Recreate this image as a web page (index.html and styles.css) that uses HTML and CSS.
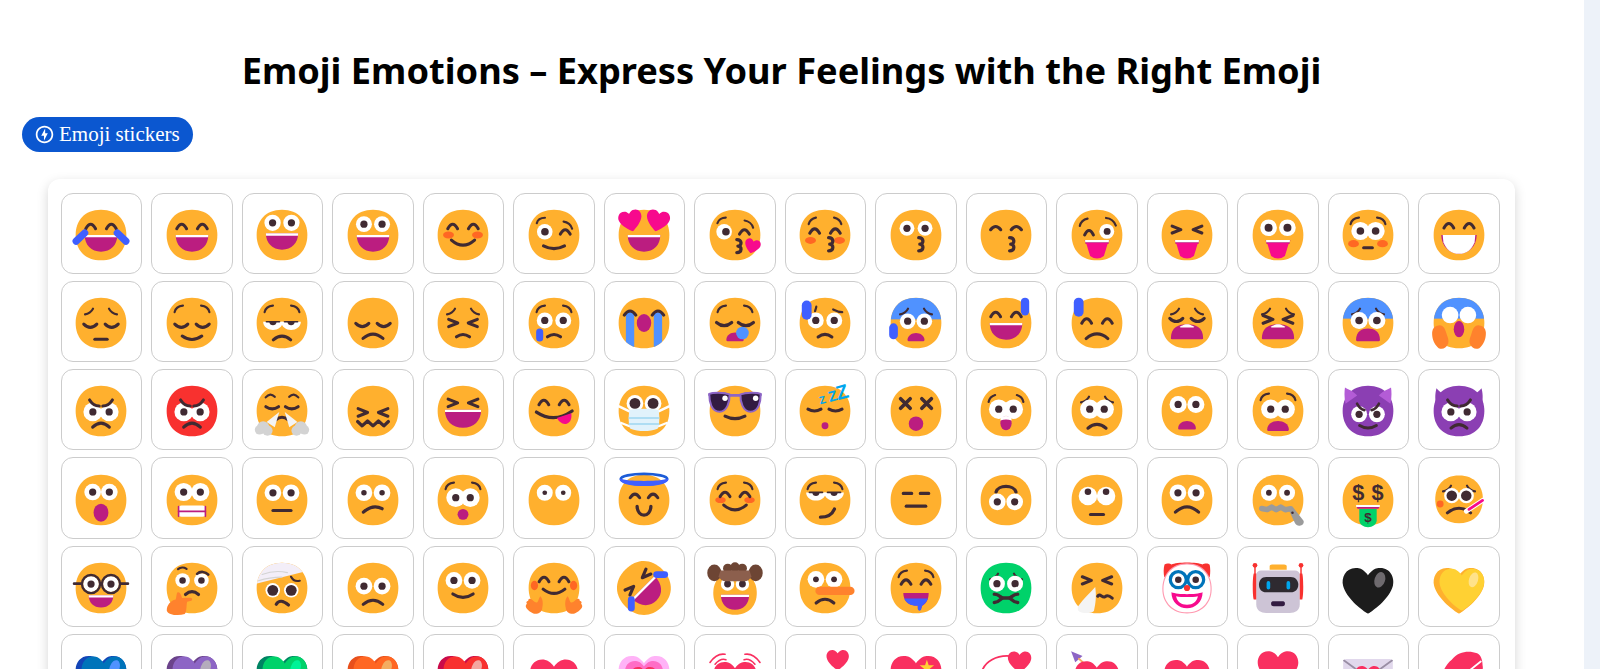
FILE: index.html
```html
<!DOCTYPE html>
<html lang="en">

<head>
    <meta charset="UTF-8">
    <meta name="viewport" content="width=device-width, initial-scale=1.0">
    <title>Emoji Emotions</title>
    <link rel="stylesheet" href="styles.css">
</head>

<body>
    <svg class="defs" width="0" height="0">
        <clipPath id="faceClip">
            <path d="M15.9989 29.9978C25.3333 29.9978 29.9978 23.7303 29.9978 15.9989C29.9978 8.26751 25.3333 2 15.9989 2C6.66443 2 2 8.26751 2 15.9989C2 23.7303 6.66443 29.9978 15.9989 29.9978Z" />
        </clipPath>
    </svg>
    <main class="page">
        <h1>Emoji Emotions – Express Your Feelings with the Right Emoji</h1>
        <a class="pill" href="#">
            <svg class="pill-icon" viewBox="0 0 24 24">
                <path fill="currentColor" d="M12 2.02c-5.51 0-9.98 4.47-9.98 9.98s4.47 9.98 9.98 9.98 9.98-4.47 9.98-9.98S17.51 2.02 12 2.02zm0 17.96c-4.4 0-7.98-3.58-7.98-7.98S7.6 4.02 12 4.02 19.98 7.6 19.98 12 16.4 19.98 12 19.98zM12.75 5l-4.5 8.5h3.14V19l4.36-8.5h-3z" />
            </svg>
            Emoji stickers
        </a>
        <section class="card">
            <div class="emoji-grid" id="emojiGrid">
                <!-- Cells are generated in script.js -->
            </div>
        </section>
    </main>
    <div class="track"></div>
    <script src="script.js"></script>
</body>

</html>
```

FILE: styles.css
```css
html,
body {
    height: 100%;
}

body {
    margin: 0;
    display: flex;
    height: 100vh;
    overflow: hidden;
    background-color: #fff;
    font-family: "Liberation Serif", serif;
    color: #000;
}

.defs {
    position: absolute;
}

.page {
    flex: 1;
    min-width: 0;
    padding: 46px 0 0 22px;
}

.track {
    width: 16px;
    background-color: #edf2f9;
}

h1 {
    margin: 0 43px 22px 0;
    font-family: "Noto Sans", sans-serif;
    font-size: 36.2px;
    line-height: 48px;
    font-weight: 700;
    text-align: center;
}

.pill {
    display: inline-flex;
    align-items: center;
    gap: 4px;
    height: 35px;
    margin-top: 1px;
    padding: 0 13px 0 12px;
    border-radius: 18px;
    background-color: #0b57d0;
    color: #fff;
    font-size: 21px;
    text-decoration: none;
}

.pill-icon {
    width: 21px;
    height: 21px;
}

.card {
    width: 1440px;
    margin: 27px 0 0 25.5px;
    padding: 13.5px 14.5px 13.5px 13px;
    background-color: #fff;
    border-radius: 12px;
    box-shadow: 0 4px 12px rgba(0, 0, 0, 0.17);
}

.emoji-grid {
    display: grid;
    grid-template-columns: repeat(16, 81.5px);
    grid-auto-rows: 81.3px;
    column-gap: 9px;
    row-gap: 7px;
}

.emoji-cell {
    display: flex;
    justify-content: center;
    align-items: center;
    box-sizing: border-box;
    padding-top: 3.5px;
    border: 1px solid #ccc;
    border-radius: 12px;
    background-color: #fff;
}

.emoji {
    width: 58px;
    height: 58px;
    overflow: visible;
}

.emoji-letter {
    font-family: "Liberation Sans", sans-serif;
    font-weight: 700;
}
```

FILE: script.js
```js
const DARK = '#402A32';
const MOUTH = '#BB1D80';
const PINK = '#F70A8D';
const BLUE = '#3F5FFF';
const SKY = '#5092FF';
const ORANGE = '#FF822D';
const BLUSH = '#FF6723';
const PURPLE = '#8D65C5';
const DEVIL = '#8B3FB3';
const RED = '#F92F60';
const FACE_PATH = 'M15.9989 29.9978C25.3333 29.9978 29.9978 23.7303 29.9978 15.9989C29.9978 8.26751 25.3333 2 15.9989 2C6.66443 2 2 8.26751 2 15.9989C2 23.7303 6.66443 29.9978 15.9989 29.9978Z';
const HEART_PATH = 'M21.0084 5.16227C18.1675 5.67067 15.9969 9.06675 15.9969 9.06675C15.9969 9.06675 13.8162 5.67067 10.9854 5.16227C3.97328 3.91162 1.08242 10.1547 2.25277 14.8015C3.98329 21.6648 12.3058 27.8164 15.0866 29.7178C15.6367 30.0941 16.357 30.0941 16.9171 29.7178C19.708 27.8164 28.0304 21.6648 29.7509 14.8015C30.9113 10.1547 28.0204 3.91162 21.0084 5.16227Z';

// Small drawing helpers, all in the 32 unit box of the emoji
const face = (c = '#FFB02E') => `<path fill="${c}" d="${FACE_PATH}"/>`;
const stroke = (d, w = 1.7, c = DARK) => `<path d="${d}" fill="none" stroke="${c}" stroke-width="${w}" stroke-linecap="round" stroke-linejoin="round"/>`;
const fill = (d, c) => `<path d="${d}" fill="${c}"/>`;
const dot = (x, y, r, c = DARK) => `<circle cx="${x}" cy="${y}" r="${r}" fill="${c}"/>`;
const both = s => s + `<g transform="matrix(-1 0 0 1 32 0)">${s}</g>`;
const heart = (x, y, s, rot = 0, c = RED) => `<path fill="${c}" transform="translate(${x} ${y}) rotate(${rot}) scale(${s}) translate(-16 -17)" d="${HEART_PATH}"/>`;
const placed = (x, y, s, c = RED) => `<path fill="${c}" transform="translate(${x} ${y}) scale(${s})" d="${HEART_PATH}"/>`;

const eyes = (dx, y, r = 4.4, p = 2, pdx = 0, py = 0) =>
    dot(16 - dx, y, r, '#fff') + dot(16 + dx, y, r, '#fff') + dot(16 - dx + pdx, y + py, p) + dot(16 + dx + pdx, y + py, p);
const arc = (x, y, w = 2.7, h = 3) => stroke(`M${x - w} ${y + h / 2}Q${x} ${y - h * 1.1} ${x + w} ${y + h / 2}`);
const arcs = (dx = 5.7, y = 11, w = 2.7, h = 3) => arc(16 - dx, y, w, h) + arc(16 + dx, y, w, h);
const closed = (dx = 5.9, y = 17, w = 3.6, h = 1.8) => both(stroke(`M${16 - dx - w} ${y}Q${16 - dx} ${y + h * 2} ${16 - dx + w} ${y}`));
const squint = (y, dx = 5.8, s = 2.5) => both(stroke(`M${16 - dx - s} ${y - s * 0.8}L${16 - dx + s} ${y}L${16 - dx - s} ${y + s * 0.8}`));
const sadBrows = both(stroke('M7.2 11.2C9 11 11 9.5 11.6 8.1', 1.2));
const archBrows = both(stroke('M6.4 10C6.8 8 8.6 6.6 11 6.4', 1.2));
const frown = (y = 23, w = 5.2, h = 2.6) => stroke(`M${16 - w} ${y + h / 2}Q16 ${y - h * 1.1} ${16 + w} ${y + h / 2}`);
const smile = (y = 20, w = 6.4, h = 2.8) => stroke(`M${16 - w} ${y}Q16 ${y + h * 2} ${16 + w} ${y}`);
const dash = (y = 25, w = 3.2) => stroke(`M${16 - w} ${y}H${16 + w}`);
const blush = (dx = 8, y = 16, rx = 3, ry = 1.9) => `<ellipse cx="${16 - dx}" cy="${y}" rx="${rx}" ry="${ry}" fill="${BLUSH}"/><ellipse cx="${16 + dx}" cy="${y}" rx="${rx}" ry="${ry}" fill="${BLUSH}"/>`;
const grin = (t = 16, h = 9.2, w = 9) =>
    fill(`M${16 - w} ${t}H${16 + w}C${16 + w} ${t + h * 0.6} ${16 + w * 0.6} ${t + h} 16 ${t + h}C${16 - w * 0.6} ${t + h} ${16 - w} ${t + h * 0.6} ${16 - w} ${t}Z`, MOUTH) +
    fill(`M${16 - w} ${t}H${16 + w}L${16 + w - 0.1} ${t + 1.3}H${16 - w + 0.1}Z`, '#fff');
const dome = (t, b, w) => fill(`M${16 - w} ${b - 0.6}C${16 - w} ${t + 1.5} ${16 - w * 0.5} ${t} 16 ${t}C${16 + w * 0.5} ${t} ${16 + w} ${t + 1.5} ${16 + w} ${b - 0.6}Q${16 + w} ${b} ${16 + w - 0.6} ${b}H${16 - w + 0.6}Q${16 - w} ${b} ${16 - w} ${b - 0.6}Z`, MOUTH);
const oval = (y, rx, ry) => `<ellipse cx="16" cy="${y}" rx="${rx}" ry="${ry}" fill="${MOUTH}"/>`;
const tongue = (c = PINK) =>
    fill('M9.2 18.8H22.8L22.3 21H9.7Z', MOUTH) + fill('M9.4 18.8H22.6L22.5 20H9.5Z', '#fff') +
    fill('M10 20.4H22L19.8 27.6Q16 30.4 12.2 27.6Z', c);
const lips = (x, y) => stroke(`M${x} ${y}C${x + 3} ${y} ${x + 3} ${y + 3.5} ${x + 0.6} ${y + 3.6}C${x + 3} ${y + 3.7} ${x + 3} ${y + 7.2} ${x} ${y + 7.2}`, 1.8);
const capsule = (x, y1, y2, w = 4.6, c = BLUE) => stroke(`M${x} ${y1 + w / 2}V${y2 - w / 2}`, w, c);
const blueTop = (y = 14) => `<rect x="0" y="0" width="32" height="${y}" fill="${SKY}" clip-path="url(#faceClip)"/>`;
const angry = (c) =>
    eyes(4.5, 16.5, 5.2, 2) + fill('M7.5 8.6L16 14.8L24.5 8.6V6H7.5Z', c) +
    both(stroke('M9.7 9.9C11 12 13 13.2 15 13.2', 1.7));
const halfEyes = (dx, y) => both(
    fill(`M${16 - dx - 5.4} ${y}H${16 - dx + 5.4}C${16 - dx + 5.2} ${y + 6} ${16 - dx - 5.2} ${y + 6} ${16 - dx - 5.4} ${y}Z`, '#fff') +
    fill(`M${16 - dx - 2} ${y}H${16 - dx + 2}C${16 - dx + 2} ${y + 2.6} ${16 - dx - 2} ${y + 2.6} ${16 - dx - 2} ${y}Z`, DARK) +
    stroke(`M${16 - dx - 3.6} ${y}H${16 - dx + 3.6}`, 0.9));
const glossHeart = (c, shade, gloss) =>
    fill(HEART_PATH, shade) + `<path fill="${c}" transform="translate(3.5 0.5) scale(.88 .95)" d="${HEART_PATH}"/>` +
    (gloss ? `<ellipse cx="23.5" cy="11.5" rx="2.7" ry="4.4" transform="rotate(20 23.5 11.5)" fill="${gloss}"/>` : '');
const zed = (x, y, s, rot) => `<text x="${x}" y="${y}" class="emoji-letter" font-size="${s}" fill="#00A6ED" transform="rotate(${rot} ${x} ${y})">Z</text>`;
const money = (x, y, s, c = DARK) => `<text x="${x}" y="${y}" class="emoji-letter" font-size="${s}" text-anchor="middle" fill="${c}">$</text>`;

const emojis = [
    // Row 1
    face() + arcs() + grin() + stroke('M2.3 19.4L7 14.9', 4, BLUE) + stroke('M29.7 19.4L25 14.9', 4, BLUE),
    face() + arcs() + grin(),
    face() + eyes(5.2, 9.3, 4.5, 2) + grin(15.1, 9, 8.9),
    face() + eyes(5, 10, 4.4, 2) + grin(16),
    face() + blush() + arcs(5.7, 11) + smile(18.8),
    face() + dot(10.9, 14.2, 4.3, '#fff') + dot(11, 14.2, 2.1) + arc(22.2, 14) + stroke('M6.5 9.5C7 7.5 9 6.5 11 6.5', 1.2) + stroke('M21.3 8.6C23.5 8.8 25.5 10.5 26 12.5', 1.2) + smile(22, 5.8, 1.5),
    face() + grin() + heart(8.6, 8, 0.46, -12, PINK) + heart(23.6, 8, 0.46, 12, PINK),
    face() + dot(10, 14.2, 4.3, '#fff') + dot(11, 14.2, 2.1) + arc(21.2, 14) + stroke('M6.3 9.5C6.8 7.6 8.8 6.4 10.9 6.4', 1.2) + stroke('M21.3 8C23.5 8.3 25.5 10 26 12', 1.2) + lips(17, 18.5) + heart(25.6, 22, 0.31, 15, PINK),
    face() + blush(8, 19) + arcs(5.7, 13.5) + both(stroke('M7 10C7.5 8.2 9 6.8 11 6.4', 1.2)) + lips(18, 17.5),
    face() + eyes(5, 12.3, 4.1, 2) + lips(17.5, 17.5),
    face() + arcs(5.7, 12, 2.8, 2.2) + lips(18, 17.5),
    face() + arc(11.6, 14.4, 2.4) + dot(21.4, 14, 4.1, '#fff') + dot(21.6, 14, 1.9) + stroke('M6.5 11C7 9 8.5 7.5 10.8 7', 1.2) + stroke('M21 6.6C23.5 6.8 25.5 8.5 26.4 10.8', 1.2) + tongue(),
    face() + squint(13, 5.8, 2.4) + tongue(),
    face() + eyes(5.2, 12, 4.6, 2.2) + tongue(),
    face() + eyes(4.2, 13.8, 5, 2.1) + archBrows + blush(8, 20.8, 3, 2) + dash(23, 2.4),
    face() + arcs(5.6, 10.6) + fill('M6.2 16H25.8C25.6 22.5 21 26.4 16 26.4C11 26.4 6.4 22.5 6.2 16Z', MOUTH) + fill('M7 16H25L24.6 20C23 24 20.5 26.4 16 26.4C11.5 26.4 9 24 7.4 20Z', '#fff'),

    // Row 2
    face() + sadBrows + closed(5.9, 16.6) + dash(25, 3.4),
    face() + archBrows + closed(5.9, 16.6) + smile(23.2, 5.4, 1.9),
    face() + archBrows + halfEyes(5, 15.3) + frown(24, 4.8),
    face() + closed(5.9, 16.2) + frown(23, 5.5, 3),
    face() + sadBrows + squint(16, 5.4, 2.5) + frown(22.8, 3.6, 1.6),
    face() + archBrows + eyes(5.1, 14.6, 4.4, 2) + frown(22.8, 3.6, 1.6) + capsule(8.1, 19, 26.2, 3.9),
    face() + `<g clip-path="url(#faceClip)"><rect x="6" y="10" width="4.6" height="22" fill="${SKY}"/><rect x="21.4" y="10" width="4.6" height="22" fill="${SKY}"/></g>` + arcs(7.7, 10.2, 3.2, 2.8) + oval(16, 4, 4.9),
    face() + archBrows + closed(6, 15.7, 4.2) + dome(21.2, 26, 4.8) + dot(20.1, 21.5, 3.5, SKY),
    face() + eyes(5.1, 14.6, 4.4, 2) + stroke('M20.5 8.5C22.5 9.5 24 10 25.5 10', 1.2) + stroke('M10.5 9.5C10.8 8.5 11 8 11.2 7', 1.2) + frown(22.8, 3.8, 1.8) + capsule(5.9, 3.6, 14.2, 5.4),
    face() + blueTop() + sadBrows + eyes(4.6, 15, 4.3, 2) + dome(21.5, 26, 4.7) + capsule(3.6, 16.2, 25, 4.8),
    face() + arcs() + grin() + capsule(26.5, 2, 11.8, 4.6),
    face() + arcs(5.7, 14.6) + frown(23, 6, 3.2) + capsule(5.9, 2, 12.5, 5.4),
    face() + sadBrows + closed(5.9, 13.4) + dome(16.7, 25, 8.9) + dome(16.7, 18.5, 4).replace(MOUTH, '#fff'),
    face() + sadBrows + squint(14, 5.5, 2.7) + dome(16.7, 25, 8.9) + dome(16.7, 18.5, 4).replace(MOUTH, '#fff'),
    face() + blueTop(13.6) + sadBrows + eyes(4.9, 14.6, 4.7, 2.1) + dome(19, 26, 6.6),
    face() + blueTop(13.6) + dot(11.1, 11.6, 4.6, '#fff') + dot(20.9, 11.6, 4.6, '#fff') + oval(19.4, 2.9, 4.5) +
        both(fill('M4 17.5C6.5 16.5 8 18 9 21.5C10 24.5 10.5 25.5 10 27.5C8.5 31 5 31 3.5 28.5C2 27 1 24 1.2 21C1.5 19 2.5 17.7 4 17.5Z', ORANGE)),

    // Row 3
    face() + angry('#FFB02E') + frown(23.5, 4.6, 2.8),
    face('#F8312F') + angry('#F8312F') + frown(23.5, 4.6, 2.8),
    face() + both(stroke('M7 8.5Q9.5 5.5 12 8.2', 1.2)) + closed(5.4, 13.6, 3.5, 1.2) + frown(20, 3.4, 1.8) +
        both(fill('M14.5 16.5L12 25L7.5 22Z', '#F4F4F4') + dot(5.6, 25, 3.4, '#D3D3D3') + dot(3.6, 26.4, 2.6, '#D3D3D3') + dot(8, 26.8, 2.8, '#D3D3D3')),
    face() + squint(16.8, 5.6, 2.6) + stroke('M7.5 21.8L10 24.2L13 21.5L16 24.2L19 21.5L22 24.2L24.5 21.8', 1.8),
    face() + squint(11.5, 5.6, 2.6) + grin(15.3, 10, 10),
    face() + arcs(5.6, 11) + stroke('M6.3 16.6Q16 23 26 16', 1.8) + fill('M17.5 19.8L25.5 17.3C25.9 19.5 25.4 22.4 23 23C20.4 23.6 18.8 21.6 17.5 19.8Z', PINK),
    face() + dot(11, 11.8, 4.6, '#fff') + dot(21, 11.8, 4.6, '#fff') + dot(11, 11.8, 3) + dot(21, 11.8, 3) +
        both(stroke('M2.2 13.4L8 16.2', 1.4, '#fff') + stroke('M3.5 22.6L8 24.4', 1.2, '#fff')) +
        fill('M8 15.5C13 14.5 19 14.5 24 15.5C24.8 19.5 24.5 24 23.5 25.8C19 27.5 13 27.5 8.5 25.8C7.5 24 7.2 19.5 8 15.5Z', '#E1F2FB') +
        stroke('M8 19.8H24M8 23.2H24', 1.1, '#AEDDF3'),
    face() + smile(18.8, 5.5, 1.4) + stroke('M2 7Q9 5.5 12.6 7.4H19.4Q23 5.5 30 7', 1.6, PURPLE) +
        both(fill('M1.8 6.6C4 5.6 10 5.7 13 6.8C13.2 11 11.5 16.4 7.5 16.4C3 16.4 1.8 11 1.8 6.6Z', '#321B41') + stroke('M1.8 6.6C4 5.6 10 5.7 13 6.8C13.2 11 11.5 16.4 7.5 16.4C3 16.4 1.8 11 1.8 6.6Z', 1.1, PURPLE)) +
        dot(10.5, 9, 1.5, '#fff') + dot(27.4, 9, 1.5, '#fff'),
    face() + closed(5.8, 15, 3.6, 1) + dot(16, 24.1, 1.9, MOUTH) + zed(13.4, 12.3, 5.8, -15) + zed(18.6, 11, 8, -15) + zed(23.2, 10, 11, -15),
    face() + both(stroke('M7.5 9.2L12.8 14.5M12.8 9.2L7.5 14.5', 2)) + dot(16, 23, 4, MOUTH),
    face() + eyes(4, 15, 5.4, 2) + both(stroke('M6.4 11C6.8 9 8 7.8 10 7.2', 1.2)) + oval(22.7, 3.1, 3.9) + fill('M12.9 22V21C12.9 19.5 14 18.8 16 18.8C18 18.8 19.1 19.5 19.1 21V21.2C17 20.6 15 20.6 12.9 21.2Z', '#fff'),
    face() + sadBrows + eyes(4, 15, 5.3, 2) + frown(24.2, 5, 2.6),
    face() + eyes(4.9, 12.4, 4.7, 2) + dome(21.5, 26.2, 4.9),
    face() + archBrows + eyes(4, 15, 5.3, 2) + dome(21.5, 27, 6),
    face(DEVIL) + both(fill('M3.6 12C2.8 8 3 5 3.3 3C5 4 8 5 10 7.5Z', '#B35CD6')) + eyes(4.9, 17.8, 4.4, 2) + both(stroke('M10 12C11 14 12.5 15.2 14 15.5', 1.5)) + smile(24, 4.6, 1.4),
    face(DEVIL) + both(fill('M3.5 13C2.5 9 3 5.5 3.6 3.5C5 5.5 8 7 10 7.5Z', DEVIL)) + angry(DEVIL) + frown(24.2, 4.4, 2.4),

    // Row 4
    face() + eyes(4.6, 11.6, 4.6, 2) + oval(23, 4.1, 5),
    face() + eyes(4.6, 11.6, 5, 2) + fill('M8.4 20.6C8.4 19.5 9.4 19 10.2 19H21.8C22.6 19 23.6 19.5 23.6 20.6V23.6C23.6 25 22.6 25.2 21.8 25.2H10.2C9.4 25.2 8.4 25 8.4 23.6Z', '#fff') + stroke('M8.6 19.6V25M23.4 19.6V25', 0.9, MOUTH) + stroke('M8.6 22.3H23.4', 0.9, MOUTH),
    face() + eyes(5, 12, 4.6, 2) + dash(21.8, 5),
    face() + eyes(5, 12, 4.6, 1.5) + stroke('M10.7 22.7Q16 18 21 20.8', 1.8),
    face() + archBrows + eyes(4, 14.7, 5.2, 2) + dot(16, 23.9, 3, MOUTH),
    face() + eyes(5.1, 12, 4.4, 1.3),
    face() + arcs(5, 13.5, 2.6, 2.5) + stroke('M12.2 19.5C12.4 26 19.6 26 19.8 19.5', 1.8) +
        `<ellipse cx="16" cy="4.4" rx="12.8" ry="2.8" fill="none" stroke="#1C5CD7" stroke-width="1.5"/>` + fill('M2.6 4.4C2.6 7 8 8.3 16 8.3C24 8.3 29.4 7 29.4 4.4C29.4 4 28 5.5 16 5.5C4 5.5 2.6 4 2.6 4.4Z', BLUE),
    face() + blush(8, 16, 2.9, 1.7) + arcs(5.5, 12.6) + archBrows + smile(18.8, 6.2, 2.6),
    face() + archBrows + halfEyes(5, 11.8) + stroke('M13.5 25.5C17 25.5 20 23.8 21.2 21', 1.8),
    face() + stroke('M9 12.4H13.6M18.4 12.4H23', 1.8) + dash(19.4, 5.4),
    face() + stroke('M10.5 11.6C11.5 7.5 20.5 7.5 21.5 11.6', 1.8) + eyes(4.8, 17, 4.6, 2),
    face() + eyes(5, 13.8, 5.1, 1.8, 0, -2.4) + dash(24, 3.6),
    face() + eyes(5, 12, 4.6, 2) + frown(20.9, 6.4, 3.6),
    face() + eyes(5, 12, 4.4, 1.6) + stroke('M7 20.7L10 21.3L12.5 19.9L15 21.4L17.5 19.9L20 21.4L23 20.8', 3, '#9B9B9B') + fill('M22 21.6L24.4 20.2L30 27.3C30.6 28.4 29.9 30 28 30.2C26.8 30.4 26 29.6 25.4 28.8Z', '#9B9B9B') + dot(24, 23, 0.7, DARK),
    face() + money(10.7, 15.8, 12) + money(21.3, 15.8, 12) + fill('M9.4 18.8H22.6L21.8 20.8H10.2Z', MOUTH) + fill('M9.4 18.8H22.6L22.5 19.8H9.5Z', '#fff') + fill('M11.2 21H20.8V27.2C20.8 29.5 18.5 31 16 31C13.5 31 11.2 29.5 11.2 27.2Z', '#00D26A') + money(16, 28, 7.4),
    `<g transform="translate(1 0.6) scale(.94)">${face()}</g>` + sadBrows + eyes(4, 13.6, 4.2, 2.9) + frown(21.5, 6.4, 3.2) + dot(5.6, 18.2, 1.9, BLUSH) + stroke('M20 22.2L29.4 16', 2.6, '#fff') + stroke('M21.5 21.2L29 16.2', 1.5, PINK),

    // Row 5
    face() + eyes(5.5, 13.8, 4.4, 2) + stroke('M1.2 13.6H5M27 13.6H30.8', 1.6) + `<circle cx="10.5" cy="13.8" r="5" fill="none" stroke="${DARK}" stroke-width="1.3"/><circle cx="21.5" cy="13.8" r="5" fill="none" stroke="${DARK}" stroke-width="1.3"/>` + grin(20, 6.8, 6.8),
    face() + eyes(5.2, 11.8, 4, 1.8) + stroke('M8.3 5.6C9.5 4.5 11.5 4.4 13 5.4', 1.2) + stroke('M18.8 8.2C20.5 6.6 23.5 6.8 25 8.6', 1.4) + frown(18.6, 3.6, 2) + fill('M8 18.4C9.5 18 10 20 10.5 21.5L15 21.4C16.5 21.5 16.5 23 15 23.2L13.3 23.6C12.8 26 13.2 29 12 30.4C8.5 31.5 2.8 31 2.1 28.5C2 25.5 4 23 7 22.3C7.5 21 7.4 19 8 18.4Z', ORANGE),
    face() + `<path clip-path="url(#faceClip)" d="M0 14L32 6V0H0Z" fill="#F3EEF8"/>` + stroke('M5 8.5Q12 6 19 7.5M3 12Q9 10 16 10', 0.6, '#D3D3D3') + eyes(5.1, 17.3, 4, 3) + stroke('M21 9.8C21.8 11.5 23.5 12.5 25.8 12', 1.2) + stroke('M12.8 25Q15 21.5 19.6 25.4', 1.7),
    face() + eyes(5, 15, 4.6, 2) + frown(23.6, 5.4, 2.8),
    face() + eyes(5, 11.8, 4.6, 2) + smile(19.3, 5.6, 1.9),
    face() + blush(10.8, 14.6, 2, 2.6) + arcs(5.5, 11) + smile(16.6, 6, 2.4) +
        both(fill('M8.5 20.5C10 22 10 25 9.5 27C9.5 30 5.5 31 3.6 29.5C2 28.6 0.5 27.2 0.4 26C0.5 25 1.2 25 1 24.6C0.4 24 1 23 1.8 23.2C1.5 22.2 2.5 21.5 3.5 22.2C4.5 23 5.5 24 6.5 24C7.5 23.5 7.5 21.5 8.5 20.5Z', ORANGE)),
    `<g transform="rotate(-45 16 16) scale(1.03) translate(-.5 -.5)">${face()}${squint(11.5, 5.6, 2.3)}${grin(15.5, 10, 8.6)}</g>` + capsule(9, 20.6, 28.9, 3.8) + stroke('M23 8.6H27.4', 3.8, BLUE),
    `<g transform="translate(2.3 5) scale(.857)">${face()}</g>` + eyes(4.1, 13.8, 3.7, 1.9) + grin(19.7, 8.3, 7.8) +
        `<ellipse cx="4.6" cy="7.7" rx="3.9" ry="4.6" fill="#6D4534"/><ellipse cx="27.4" cy="7.7" rx="3.9" ry="4.6" fill="#6D4534"/>` +
        dot(12, 5.2, 2.6, '#6D4534') + dot(16, 4.4, 2.6, '#6D4534') + dot(20, 5.2, 2.6, '#6D4534') +
        fill('M8 6.4H24L25 9.5Q24 12.3 21 12.3H11Q8 12.3 7 9.5Z', '#8C5F4D'),
    face() + eyes(5, 11.2, 4.6, 1.6) + stroke('M13 17.6H30', 4.6, ORANGE) + frown(23, 4.9, 2.6),
    face() + archBrows + arcs(5.5, 12.4) + fill('M9 18.8H23C23 23.5 20.5 25.2 19.4 25.8L18.6 27.7C18 28.5 17 27.8 17 27V25.5C12 26.3 9 23 9 18.8Z', MOUTH) + fill('M9.4 21.8H22.6C22 23.6 20.5 25.2 19.4 25.8L18.8 28C18 29 17 28.4 17 27.5V25.8C13.5 26 11 24.8 9.4 21.8Z', BLUE),
    face('#00D26A') + sadBrows + eyes(5, 13.6, 4.4, 2) + both(stroke('M9.5 19.4C12 19.4 12.8 21 14 21.5C12.8 22.2 12 24 9.5 24', 1.8)) + stroke('M13.5 21.5H18.5', 2),
    face() + squint(11.8, 5.6, 2.5) + stroke('M16.4 20.5C17.5 18.5 19 21.8 20.4 20.8C21.6 20 22.5 20 24.4 21.6', 1.7) + fill('M15 15.5C12.5 18.5 8.5 22 5.6 26C5 28 5.5 29 8 29.6C11 30.2 14.5 29.7 14.4 28.2C15.2 25 15.8 20.5 15 15.5Z', '#F4F4F4'),
    fill('M3.6 3C5 2 7 2.7 7.5 3C10 1.5 22 1.5 24.5 3C25.5 2.5 27.5 2 28.5 3.2C28.9 5 29 8 28.5 10L25 8H7L3.5 10C3 8 3 5 3.6 3Z', '#F8312F') +
        fill('M16 2.4C25 2.4 29.6 9 29.6 16.5C29.6 24.5 24 30 16 30C8 30 2.4 24.5 2.4 16.5C2.4 9 7 2.4 16 2.4Z', '#FF99B0') + fill('M16 3C24.6 3 29 9.2 29 16.5C29 24 23.6 29.4 16 29.4C8.4 29.4 3 24 3 16.5C3 9.2 7.4 3 16 3Z', '#fff') +
        eyes(4.8, 11.4, 3.6, 1.8) + `<circle cx="11.2" cy="11.4" r="4.4" fill="none" stroke="#0074BA" stroke-width="1.8"/><circle cx="20.8" cy="11.4" r="4.4" fill="none" stroke="#0074BA" stroke-width="1.8"/>` +
        dot(16, 16, 1.7, '#F8312F') + fill('M7.4 18.4C11 19.8 21 19.8 24.6 18.4C24.6 24 20.5 27.2 16 27.2C11.5 27.2 7.4 24 7.4 18.4Z', PINK) + fill('M10 20.5C13 21.2 19 21.2 22 20.5C21.6 23.4 19.2 25.2 16 25.2C12.8 25.2 10.4 23.4 10 20.5Z', '#fff'),
    fill('M4 8.6C4 7.2 5.2 6.3 6.6 6.3H25.4C26.8 6.3 28 7.2 28 8.6V25C28 28.4 25.4 29.8 22.5 29.8H9.5C6.6 29.8 4 28.4 4 25Z', '#CDC4D6') + fill('M11.4 4.1C11.4 3.5 12 3.1 12.8 3.1H19.4C20.2 3.1 20.8 3.5 20.8 4.1V5.9H11.4Z', '#FFB02E') +
        stroke('M3.3 3.5V16M28.7 3.5V16', 0.8, '#F8312F') + fill('M2.6 8H4V22.4H2.6C1.9 20 1.9 10.5 2.6 8ZM28 8H29.4C30.1 10.5 30.1 20 29.4 22.4H28Z', '#F8312F') + dot(3.3, 3.5, 1.3, '#F8312F') + dot(28.7, 3.5, 1.3, '#F8312F') +
        fill('M9.5 9.9H23C25.6 9.9 27.2 11.8 27.2 14.2C27.2 16.6 25.6 18.4 23 18.4H9.5C6.9 18.4 5.5 16.6 5.5 14.2C5.5 11.8 6.9 9.9 9.5 9.9Z', '#2E2A30') + stroke('M10.7 13.2V15.8M21.7 13.2V15.8', 2, '#00A6ED') +
        fill('M12.2 24.3C12.2 23.6 12.8 23.3 13.6 23.3H18.4C19.2 23.3 19.8 23.6 19.8 24.3V25C19.8 25.7 19.2 26 18.4 26H13.6C12.8 26 12.2 25.7 12.2 25Z', '#321B41'),
    fill(HEART_PATH, '#1C1C1C') + `<ellipse cx="22.5" cy="11.5" rx="2.9" ry="4.4" transform="rotate(18 22.5 11.5)" fill="#6E6A6E"/>`,
    fill(HEART_PATH, '#FFB02E') + `<path fill="#FFD133" transform="translate(3.5 0.8) scale(.88 .92)" d="${HEART_PATH}"/>` + `<ellipse cx="24" cy="11.5" rx="2.5" ry="4.2" transform="rotate(18 24 11.5)" fill="#FFE28A"/>`,

    // Row 6, only the top of it is on screen
    glossHeart('#0074BA', '#1345B7', SKY),
    glossHeart(PURPLE, '#6B438B', '#B4ACBC'),
    glossHeart('#00D26A', '#008463', '#00F397'),
    glossHeart('#FF6723', '#E8501C', '#F3AD61'),
    glossHeart('#F8312F', '#CA0B4A', '#F4A6A0'),
    placed(0.8, 2.2, 0.95),
    fill(HEART_PATH, '#FFB3F7') + placed(4, 4, 0.75, '#FF6DC6') + placed(8, 8.5, 0.5),
    placed(2.4, 4, 0.85) + stroke('M2.2 8.5Q6 3.2 10.5 4M5 9.5Q8 6 11 7M29.8 8.5Q26 3.2 21.5 4M27 9.5Q24 6 21 7', 0.9, RED),
    heart(23, 7, 0.44, 0) + placed(2, 10, 0.6),
    fill(HEART_PATH, RED) + fill('M22 7L23 10H26L23.6 12L24.5 15L22 13L19.5 15L20.4 12L18 10H21Z', '#FFD133'),
    stroke('M2.6 14C4 8 11 4.5 18 5', 1, RED) + heart(23.5, 8, 0.46, 0),
    fill('M1.7 2.4L8 5L4 8.4Z', PURPLE) + stroke('M6 6.5L10 10', 1, '#F3AD61') + placed(2, 3.5, 0.87),
    placed(1.6, 2.7, 0.9),
    placed(3.2, -1.7, 0.8),
    fill('M2.3 8C2.3 7 3.3 6.6 4 6.6H28C28.7 6.6 29.7 7 29.7 8V28H2.3Z', '#E1D8EC') + stroke('M2.8 7.5L16 17L29.2 7.5', 1, '#998EA4') + placed(8, 8, 0.5),
    fill('M12 7C16 2 22 2 26 3.5C28 4.5 29 7 29 10C30 14 26 20 20 22L5 28C3 24 3 20 5 18C7 14 9 9 12 7Z', RED) + stroke('M8 24L28 8', 1, '#fff')
];

const grid = document.getElementById('emojiGrid');

emojis.forEach(content => {
    const cell = document.createElement('div');
    cell.classList.add('emoji-cell');
    cell.innerHTML = `<svg class="emoji" viewBox="0 0 32 32">${content}</svg>`;
    grid.appendChild(cell);
});
```
